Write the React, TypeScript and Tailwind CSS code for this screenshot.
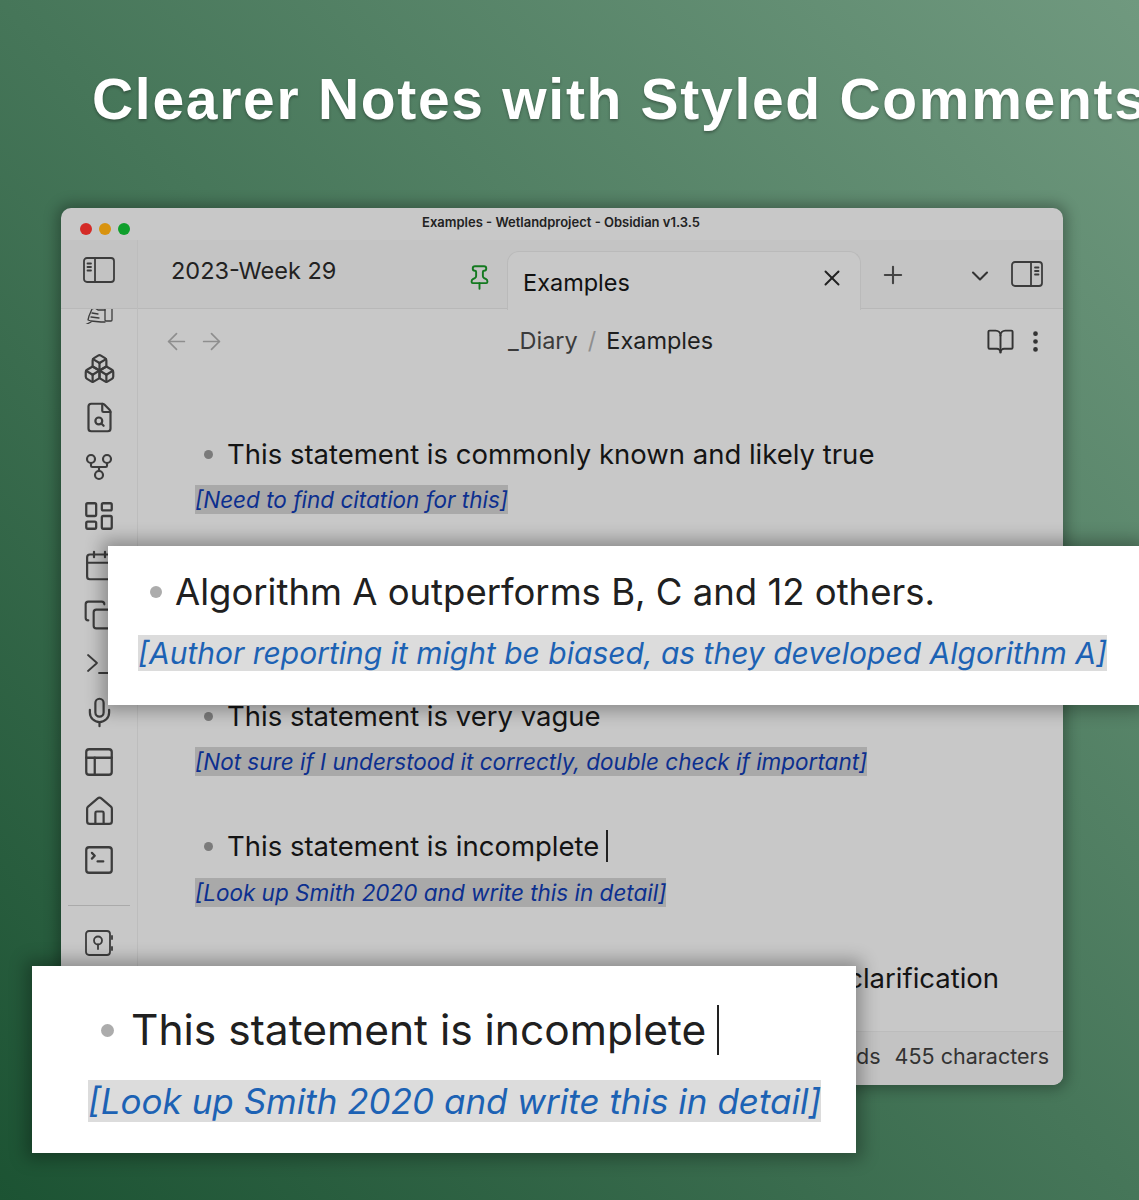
import { ArrowLeft, ArrowRight, BookOpen, Boxes, ChevronDown, Copy, FileSearch, GitFork, Home, LayoutDashboard, Calendar, Mic, MoreVertical, PanelsTopLeft, Pin, Plus, SquareTerminal, X } from "lucide-react";

const inter = { fontFamily: "Inter, 'Liberation Sans', sans-serif" };

function PanelIcon({ flip }: { flip?: boolean }) {
  return (
    <svg width="32" height="26" viewBox="0 0 32 26" fill="none" stroke="currentColor" strokeWidth="1.8" strokeLinecap="round">
      <rect x="1" y="1" width="30" height="24" rx="3" />
      {flip ? (
        <>
          <path d="M20 1v24" />
          <path d="M24 6.5h3.5M24 10h3.5M24 13.500h3.5" />
        </>
      ) : (
        <>
          <path d="M12 1v24" />
          <path d="M4.500 6.500H8M4.500 10H8M4.500 13.500H8" />
        </>
      )}
    </svg>
  );
}

function HandIcon() {
  return (
    <svg width="30" height="20" viewBox="0 0 30 20" fill="none" stroke="currentColor" strokeWidth="1.300" strokeLinejoin="round" strokeLinecap="round">
      <rect x="21" y="2" width="7" height="13" rx="1" />
      <path d="M21 4h-7l-3-2-3 1-3 7-1 4 3 1 10 1h4" />
      <path d="M1 19l6-3M8 7l6 1M7 11l8 1" />
    </svg>
  );
}

function VaultIcon() {
  return (
    <svg width="30" height="28" viewBox="0 0 30 28" fill="none" stroke="currentColor" strokeWidth="1.800" strokeLinecap="round">
      <rect x="2" y="2" width="24" height="24" rx="3" />
      <circle cx="14" cy="11.500" r="4" />
      <path d="M14 15.500V20M28 7v3M28 18v3" />
    </svg>
  );
}

function TerminalGlyph() {
  return (
    <svg width="26" height="22" viewBox="0 0 26 22" fill="none" stroke="currentColor" strokeWidth="1.800" strokeLinecap="round" strokeLinejoin="round">
      <path d="M2 2l9 8-9 8M13 20h12" />
    </svg>
  );
}

function Logo() {
  return (
    <svg width="76" height="76" viewBox="0 0 76 76" className="drop-shadow-[0_2px_2px_rgba(0,0,0,0.35)]">
      <circle cx="38" cy="38" r="37.500" fill="#fff" />
      <path
        d="M16 47C9 40 12 28 23 27c10-1 15 8 20 14 4 5 8 8 14 7 6-1 8-7 5-11-3-3-8-3-10 0 1-6 6-9 12-7 8 3 10 13 4 20-6 6-15 6-21 2-6-5-10-12-15-16-4-3-9-3-11 1-2 4 0 8 4 9 3 1 6 0 7-2-1 6-5 9-11 8-2 0-3-2-5-5z"
        fill="#4c7a60"
      />
    </svg>
  );
}

function Bullet({ text, top, cursor }: { text: string; top: string; cursor?: boolean }) {
  return (
    <div className={`flex items-center text-[27.500px] leading-[34px] text-[#141414] ${top}`}>
      <span className="ml-[66px] mr-[14px] h-[9px] w-[9px] rounded-full bg-[#7b7b7b]" />
      <span>{text}</span>
      {cursor && <span className="ml-[7px] h-[32px] w-[1.500px] bg-[#222]" />}
    </div>
  );
}

function Comment({ text, top }: { text: string; top: string }) {
  return (
    <div className={`pl-[57px] text-[22.500px] italic leading-[26px] text-[#0c2f8f] ${top}`}>
      <span className="bg-[#a9a9a9] py-[1px]">{text}</span>
    </div>
  );
}

const sideIcons = [
  <Boxes key="a" size={33} strokeWidth={1.600} />,
  <FileSearch key="b" size={33} strokeWidth={1.600} />,
  <GitFork key="c" size={32} strokeWidth={1.600} />,
  <LayoutDashboard key="d" size={34} strokeWidth={1.600} />,
  <Calendar key="e" size={33} strokeWidth={1.600} />,
  <Copy key="f" size={32} strokeWidth={1.600} />,
  <TerminalGlyph key="g" />,
  <Mic key="h" size={33} strokeWidth={1.600} />,
  <PanelsTopLeft key="i" size={34} strokeWidth={1.600} />,
  <Home key="j" size={33} strokeWidth={1.600} />,
  <SquareTerminal key="k" size={34} strokeWidth={1.600} />,
];

export default function App() {
  return (
    <div
      className="relative h-[1200px] w-[1139px] overflow-hidden bg-[linear-gradient(to_top_right,#1c5333,#70997f)]"
      style={inter}
    >
      <header className="flex h-[208px] items-start pl-[55px] pt-[61px]">
        <Logo />
        <h1
          className="ml-[37px] mt-[5px] whitespace-nowrap text-[57px] font-bold leading-[66px] tracking-[1.700px] text-white [text-shadow:0_2px_3px_rgba(0,0,0,0.3)]"
          style={{ fontFamily: "'Liberation Sans Narrow', 'Liberation Sans', sans-serif" }}
        >
          Clearer Notes with Styled Comments
        </h1>
      </header>

      <section className="relative ml-[61px] flex h-[877px] w-[1002px] flex-col overflow-hidden rounded-[10px] bg-[#c8c8c8] shadow-[0_0_14px_4px_rgba(0,0,0,0.3)]">
        <div className="flex h-[32px] shrink-0 items-center justify-center pr-[2px] pb-[2px] text-[13px] font-semibold text-[#222]">
          Examples - Wetlandproject - Obsidian v1.3.5
          <div className="absolute left-[19px] top-[15px] flex gap-[7px]">
            <span className="h-[12px] w-[12px] rounded-full bg-[#d42b27]" />
            <span className="h-[12px] w-[12px] rounded-full bg-[#d8930f]" />
            <span className="h-[12px] w-[12px] rounded-full bg-[#0f9f2c]" />
          </div>
        </div>

        <div className="flex min-h-0 flex-1">
          <aside className="flex w-[77px] shrink-0 flex-col items-center overflow-hidden border-r border-[#bdbdbd] text-[#3c3c3c]">
            <div className="flex h-[69px] w-full shrink-0 items-center justify-center border-b border-[#b9b9b9] bg-[#c3c3c3] pb-[8px] pr-[1px]">
              <PanelIcon />
            </div>
            <div className="flex h-[15px] w-full justify-center overflow-hidden">
              <div className="-mt-[3px]"><HandIcon /></div>
            </div>
            <div className="mt-[20px] flex flex-col items-center">
              {sideIcons.map((icon, i) => (
                <div key={i} className="flex h-[49.200px] w-[60px] items-center justify-center">
                  {icon}
                </div>
              ))}
            </div>
            <div className="mt-[20px] h-px w-[62px] shrink-0 bg-[#aaa]" />
            <div className="mt-[23px]"><VaultIcon /></div>
          </aside>

          <main className="flex min-w-0 flex-1 flex-col">
            <div className="relative flex h-[69px] shrink-0 items-center bg-[#c4c4c4] text-[23.500px] text-[#222]">
              <div className="absolute inset-x-0 bottom-0 h-px bg-[#b8b8b8]" />
              <span className="ml-[33px] mb-[8px]">2023-Week 29</span>
              <Pin size={27} strokeWidth={1.700} className="absolute left-[328px] top-[24px] text-[#13791f]" />
              <div className="absolute left-[369px] top-[11px] flex h-[59px] w-[354px] items-start rounded-t-[12px] border border-b-0 border-[#bababa] bg-[#c8c8c8] pl-[15px] pt-[13px] text-[#111]">
                Examples
                <X size={26} strokeWidth={1.800} className="absolute right-[15px] top-[13px] text-[#222]" />
              </div>
              <Plus size={28} strokeWidth={1.800} className="absolute left-[741px] top-[21px] text-[#444]" />
              <ChevronDown size={28} strokeWidth={1.800} className="absolute left-[828px] top-[22px] text-[#333]" />
              <div className="absolute left-[873px] top-[21px] text-[#3c3c3c]"><PanelIcon flip /></div>
            </div>

            <div className="flex h-[64px] shrink-0 items-center text-[23.500px] text-[#1f1f1f]">
              <ArrowLeft size={27} strokeWidth={1.500} className="ml-[25px] text-[#8e8e8e]" />
              <ArrowRight size={27} strokeWidth={1.500} className="ml-[8px] text-[#8e8e8e]" />
              <div className="ml-[283px] flex items-center">
                <span className="text-[#3b3b3b]">_Diary</span>
                <span className="mx-[10px] text-[#8e8e8e]">/</span>
                <span>Examples</span>
              </div>
              <BookOpen size={29} strokeWidth={1.600} className="ml-[273px] text-[#333]" />
              <MoreVertical size={27} strokeWidth={2.200} className="ml-[7px] text-[#333]" />
            </div>

            <div className="min-h-0 flex-1 overflow-hidden">
              <Bullet text="This statement is commonly known and likely true" top="mt-[64px]" />
              <Comment text="[Need to find citation for this]" top="mt-[16px]" />
              <Bullet text="This statement is very vague" top="mt-[186px]" />
              <Comment text="[Not sure if I understood it correctly, double check if important]" top="mt-[16px]" />
              <Bullet text="This statement is incomplete" top="mt-[54px]" cursor />
              <Comment text="[Look up Smith 2020 and write this in detail]" top="mt-[17px]" />
              <Bullet text="This statement is ambiguous and needs further clarification" top="mt-[55px]" />
            </div>

            <div className="flex h-[54px] shrink-0 items-center justify-end border-t border-[#bcbcbc] bg-[#c3c3c3] pb-[4px] pr-[14px] text-[21.500px] text-[#333]">
              72 words<span className="ml-[14px]">455 characters</span>
            </div>
          </main>
        </div>
      </section>

      <div className="absolute left-[108px] top-[546px] h-[159px] w-[1031px] bg-white shadow-[0_0_16px_6px_rgba(0,0,0,0.3)]">
        <div className="mt-[24px] flex items-center text-[36.500px] leading-[44px] text-[#202020]">
          <span className="ml-[42px] mr-[13px] h-[12px] w-[12px] rounded-full bg-[#acacac]" />
          Algorithm A outperforms B, C and 12 others.
        </div>
        <div className="mt-[21px] pl-[30px] text-[30px] italic leading-[36px] text-[#1c62b4]">
          <span className="bg-[#dcdcdc]">[Author reporting it might be biased, as they developed Algorithm A]</span>
        </div>
      </div>

      <div className="absolute left-[32px] top-[966px] h-[187px] w-[824px] bg-white shadow-[0_0_16px_6px_rgba(0,0,0,0.3)]">
        <div className="mt-[39px] flex items-center text-[42.500px] leading-[50px] text-[#202020]">
          <span className="ml-[69px] mr-[17px] h-[13px] w-[13px] rounded-full bg-[#acacac]" />
          This statement is incomplete
          <span className="ml-[11px] h-[50px] w-[2px] bg-[#222]" />
        </div>
        <div className="mt-[26px] pl-[56px] text-[35px] italic leading-[40px] text-[#1c62b4]">
          <span className="bg-[#dcdcdc]">[Look up Smith 2020 and write this in detail]</span>
        </div>
      </div>
    </div>
  );
}
